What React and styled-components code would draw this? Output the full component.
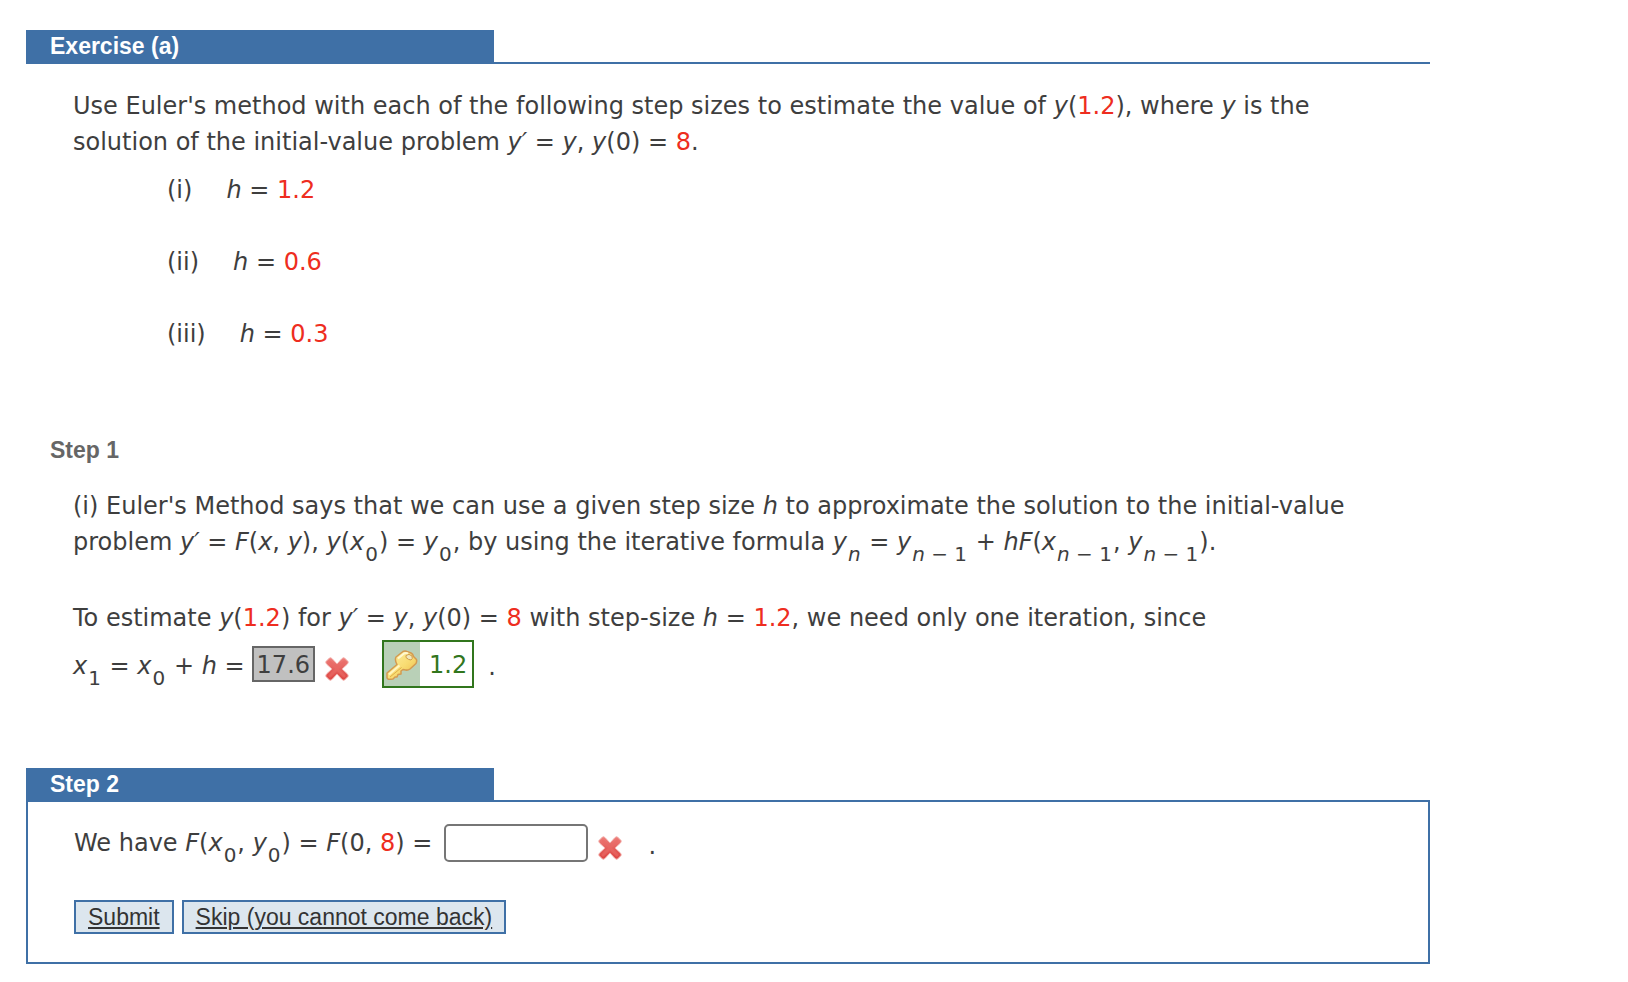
import React, { useState } from 'react';
import styled, { createGlobalStyle } from 'styled-components';

const blue = '#3f70a6';
const mathFont = "Verdana, 'DejaVu Sans', sans-serif";
const labelFont = "'Liberation Sans', Arial, sans-serif";

const GlobalStyle = createGlobalStyle`
  body {
    margin: 0;
    background: #fff;
    color: #3e3e3e;
    font-family: ${mathFont};
    font-size: 24px;
    line-height: 36px;
  }
`;

const Page = styled.main`
  box-sizing: border-box;
  max-width: 1456px;
  padding: 30px 26px 18px;
`;

const HeaderRow = styled.header`
  border-bottom: 2px solid ${blue};
`;

const Tab = styled.h2`
  box-sizing: border-box;
  width: 33.3333%;
  margin: 0;
  padding: 0 24px;
  background: ${blue};
  color: #fff;
  font: bold 23px/32px ${labelFont};
`;

const StepTitle = styled.h2`
  margin: 0;
  padding: 0 24px;
  color: #666;
  font: bold 23px/28px ${labelFont};
`;

const Content = styled.div`
  padding: 24px 47px 0;
`;

const Paragraph = styled.p`
  margin: 0 0 ${p => p.$gap || 0}px;
`;

const PartList = styled.ul`
  display: flex;
  flex-direction: column;
  gap: 36px;
  margin: 12px 0 84px;
  padding: 0 0 0 94px;
  list-style: none;
`;

const Part = styled.li`
  display: flex;
  gap: 34px;
`;

const Math = styled.span`
  white-space: nowrap;
`;

const Red = styled.span`
  color: #ee2d20;
`;

const Sub = styled.sub`
  margin: 0 1px;
  font-size: 20px;
  line-height: 0;
  vertical-align: -11px;
`;

const AnswerRow = styled.div`
  display: flex;
  align-items: center;
  margin: ${p => p.$top || 0}px 0 ${p => p.$gap}px;
`;

const Equation = styled.span`
  padding-top: 4px;
  white-space: nowrap;
`;

const Given = styled.span`
  margin-left: 7px;
  padding: 2px 3px 0;
  border: 2px solid #666;
  background: #c0c0c0;
  line-height: 30px;
`;

const Mark = styled.svg`
  flex: none;
  width: 24px;
  height: 24px;
  margin: 10px 0 0 10px;
`;

const KeyBox = styled.span`
  display: flex;
  margin-left: 33px;
  border: 2px solid #31761d;
  color: #31761d;
`;

const KeyIconCell = styled.span`
  display: flex;
  align-items: center;
  justify-content: center;
  width: 36px;
  background: #b9d0b7;
`;

const KeyValue = styled.span`
  padding: 2px 5px 0 9px;
  line-height: 42px;
`;

const Dot = styled.span`
  margin: 6px 0 0 ${p => p.$left}px;
`;

const Panel = styled.form`
  padding: 20px 46px 28px;
  border: solid ${blue};
  border-width: 0 2px 2px;
`;

const AnswerInput = styled.input`
  box-sizing: border-box;
  width: 144px;
  height: 38px;
  margin-left: 12px;
  padding: 2px 6px;
  border: 2px solid #767676;
  border-radius: 5px;
  background: #fff;
  color: inherit;
  font: inherit;
`;

const Buttons = styled.div`
  display: flex;
  gap: 8px;
`;

const Button = styled.button`
  height: 34px;
  padding: 0 12px;
  border: 2px solid ${blue};
  background: #dce6ee;
  color: #333;
  font: 23px/30px ${labelFont};
  text-decoration: underline;
  cursor: pointer;
`;

function WrongMark() {
  return (
    <Mark viewBox="0 0 24 24" role="img" aria-label="Incorrect">
      <defs>
        <linearGradient id="wrong" x1="0" y1="0" x2="0" y2="1">
          <stop offset="0" stopColor="#ee7f7b" />
          <stop offset="0.5" stopColor="#e4605d" />
          <stop offset="1" stopColor="#dd4441" />
        </linearGradient>
      </defs>
      <path
        d="M1 4.5 4.5 1Q6 .4 7.2 1.8L12 7l4.800-5.200Q18 .4 19.500 1L23 4.500Q23.600 6 22.200 7.200L17 12l5.200 4.800Q23.600 18 23 19.500L19.500 23Q18 23.600 16.800 22.200L12 17l-4.800 5.200Q6 23.600 4.500 23L1 19.500Q.4 18 1.800 16.800L7 12 1.800 7.200Q.4 6 1 4.500Z"
        fill="url(#wrong)"
        stroke="#f1a9a5"
        strokeWidth="1"
      />
      <path d="M5 5l7 7 7-7M12 12l-7 7M12 12l7 7" fill="none" stroke="#ea6a66" strokeWidth="3" strokeLinecap="round" opacity="0.6" />
    </Mark>
  );
}

function KeyIcon() {
  return (
    <svg width="32" height="32" viewBox="0 0 32 32" role="img" aria-label="Answer key">
      <defs>
        <linearGradient id="gold" x1="0" y1="0" x2="1" y2="1">
          <stop offset="0" stopColor="#fff0a6" />
          <stop offset="0.55" stopColor="#f8dc72" />
          <stop offset="1" stopColor="#e8b544" />
        </linearGradient>
      </defs>
      <path
        d="M10 9 17 3.500Q19 2.500 21 3.500L25 5q2 1 2.500 3.500l3 3q.5 2-.5 4l-6 5.500q-2 1.500-4.500 1l-2.500-.5-2 1.500v3l-3 .5-1 2.500H9L7 31l-4.500.5L1 30V25L11 16.500Q8.500 12 10 9Z"
        fill="url(#gold)"
        stroke="#d39a50"
        strokeWidth="1.500"
        strokeLinejoin="round"
      />
      <path d="M3 26.500 13.500 17.500" fill="none" stroke="#fff6c4" strokeWidth="2" />
      <path d="M4 29 15.500 19.500" fill="none" stroke="#dfae48" strokeWidth="1" />
      <path d="M12 10.500 18 5.500q2-1 4 0" fill="none" stroke="#fff8d2" strokeWidth="2" />
      <path d="M20 7.500q3-2.500 6 .5 1 3-1 4-2.500 0-5-2.500Z" fill="#f0e8bd" stroke="#cf9a48" strokeWidth="1" />
    </svg>
  );
}

const parts = [
  { label: '(i)', value: '1.2' },
  { label: '(ii)', value: '0.6' },
  { label: '(iii)', value: '0.3' },
];

function App() {
  const [answer, setAnswer] = useState('');

  return (
    <Page>
      <GlobalStyle />
      <section>
        <HeaderRow><Tab>Exercise (a)</Tab></HeaderRow>
        <Content>
          <Paragraph>
            Use Euler's method with each of the following step sizes to estimate the value of{' '}
            <Math><i>y</i>(<Red>1.2</Red>),</Math> where <i>y</i> is the<br />
            solution of the initial-value problem <Math><i>y′</i> = <i>y</i>, <i>y</i>(0) = <Red>8</Red>.</Math>
          </Paragraph>
          <PartList>
            {parts.map(part => (
              <Part key={part.label}>
                <span>{part.label}</span>
                <span><i>h</i> = <Red>{part.value}</Red></span>
              </Part>
            ))}
          </PartList>
        </Content>
      </section>

      <section>
        <StepTitle>Step 1</StepTitle>
        <Content>
          <Paragraph $gap={40}>
            (i) Euler's Method says that we can use a given step size <i>h</i> to approximate the solution to the initial-value<br />
            problem <Math><i>y′</i> = <i>F</i>(<i>x</i>, <i>y</i>), <i>y</i>(<i>x</i><Sub>0</Sub>) = <i>y</i><Sub>0</Sub>,</Math> by using the iterative formula{' '}
            <Math>
              <i>y</i><Sub><i>n</i></Sub> = <i>y</i><Sub><i>n</i> − 1</Sub> + <i>hF</i>(<i>x</i><Sub><i>n</i> − 1</Sub>, <i>y</i><Sub><i>n</i> − 1</Sub>).
            </Math>
          </Paragraph>
          <Paragraph>
            To estimate <Math><i>y</i>(<Red>1.2</Red>)</Math> for <Math><i>y′</i> = <i>y</i>, <i>y</i>(0) = <Red>8</Red></Math> with step-size{' '}
            <Math><i>h</i> = <Red>1.2</Red>,</Math> we need only one iteration, since
          </Paragraph>
          <AnswerRow $top={4} $gap={80}>
            <Equation><i>x</i><Sub>1</Sub> = <i>x</i><Sub>0</Sub> + <i>h</i> =</Equation>
            <Given>17.6</Given>
            <WrongMark />
            <KeyBox>
              <KeyIconCell><KeyIcon /></KeyIconCell>
              <KeyValue>1.2</KeyValue>
            </KeyBox>
            <Dot $left={14}>.</Dot>
          </AnswerRow>
        </Content>
      </section>

      <section>
        <HeaderRow><Tab>Step 2</Tab></HeaderRow>
        <Panel onSubmit={e => e.preventDefault()}>
          <AnswerRow $gap={36}>
            <label htmlFor="answer">
              We have <Math><i>F</i>(<i>x</i><Sub>0</Sub>, <i>y</i><Sub>0</Sub>) = <i>F</i>(0, <Red>8</Red>) =</Math>
            </label>
            <AnswerInput id="answer" type="text" value={answer} onChange={e => setAnswer(e.target.value)} />
            <WrongMark />
            <Dot $left={26}>.</Dot>
          </AnswerRow>
          <Buttons>
            <Button type="submit">Submit</Button>
            <Button type="button">Skip (you cannot come back)</Button>
          </Buttons>
        </Panel>
      </section>
    </Page>
  );
}

export default App;
